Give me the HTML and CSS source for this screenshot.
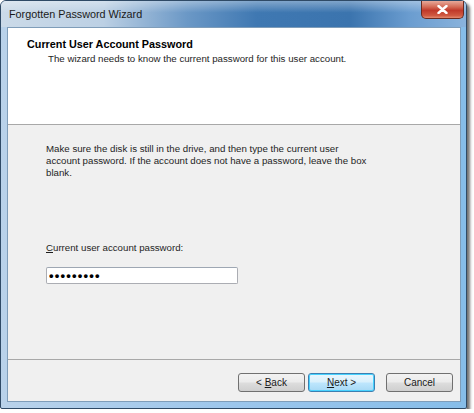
FILE: index.html
```html
<!DOCTYPE html>
<html lang="en">
<head>
  <meta charset="UTF-8" />
  <title>Forgotten Password Wizard</title>
  <link rel="stylesheet" href="styles.css">
</head>
<body>
  <div class="window">
    <div class="titlebar">
      <span class="title">Forgotten Password Wizard</span>
      <button class="close" aria-label="Close">
        <svg width="11" height="9" viewBox="0 0 11 9">
          <path d="M1.5 1 L9.5 8 M9.5 1 L1.5 8" stroke="#fff" stroke-width="2.4" stroke-linecap="round" />
        </svg>
      </button>
    </div>

    <div class="client">
      <div class="header">
        <div class="heading">Current User Account Password</div>
        <div class="subheading">The wizard needs to know the current password for this user account.</div>
      </div>

      <div class="content">
        <p class="intro">Make sure the disk is still in the drive, and then type the current user<br>account password. If the account does not have a password, leave the box<br>blank.</p>
        <label for="password"><u>C</u>urrent user account password:</label>
        <input id="password" type="password" value="123456789">
      </div>

      <div class="footer">
        <button class="btn">&lt; <u>B</u>ack</button>
        <button class="btn default"><u>N</u>ext &gt;</button>
        <button class="btn cancel">Cancel</button>
      </div>
    </div>
  </div>
</body>
</html>
```

FILE: styles.css
```css
body {
  margin: 0;
  background-color: #ffffff;
  font-family: "Liberation Sans", Arial, sans-serif;
  color: #1e1e1e;
}
.window {
  width: 467px;
  height: 409px;
  box-sizing: border-box;
  border: 1px solid #2f4a66;
  border-radius: 6px 6px 2px 2px;
  background: linear-gradient(to right, #b9d2ea 0%, #9cc6ec 50%, #86bde9 100%);
  box-shadow: 3px 3px 3px rgba(0, 0, 0, 0.55);
  display: flex;
  flex-direction: column;
  padding: 0 5px 6px 6px;
}
.titlebar {
  height: 26px;
  margin: 0 -5px 0 -6px;
  padding: 0 2px 0 8px;
  display: flex;
  align-items: flex-start;
  justify-content: space-between;
  border-radius: 5px 5px 0 0;
  background:
    linear-gradient(to bottom, rgba(255, 255, 255, 0.35) 0%, rgba(255, 255, 255, 0) 45%),
    linear-gradient(to right, #cbdae8 0%, #bcd0e4 22%, #6b98c6 40%, #3f78b2 55%, #3b74ae 75%, #6b9dd0 88%, #8ab3dc 100%);
}
.title {
  font-size: 10.8px;
  line-height: 26px;
  color: #1a1a1a;
}
.close {
  width: 43px;
  height: 18px;
  padding: 0;
  border: 1px solid #6b2a1f;
  border-top: none;
  border-radius: 0 0 5px 5px;
  background: linear-gradient(to bottom, #e7a99a 0%, #d36a55 35%, #c0392a 55%, #cf5840 85%, #e48a70 100%);
  display: flex;
  align-items: center;
  justify-content: center;
}
.client {
  flex: 1;
  display: flex;
  flex-direction: column;
  border: 1px solid #7f9db9;
  background-color: #f0f0f0;
}
.header {
  height: 97px;
  background-color: #ffffff;
  border-bottom: 1px solid #a8a8a8;
  padding: 9px 0 0 19px;
  box-sizing: border-box;
}
.heading {
  font-size: 10.8px;
  font-weight: bold;
  line-height: 15px;
  color: #000000;
}
.subheading {
  font-size: 9.7px;
  line-height: 14px;
  padding-left: 21px;
}
.content {
  flex: 1;
  padding: 18px 0 0 38px;
  display: flex;
  flex-direction: column;
  align-items: flex-start;
  border-bottom: 1px solid #a8a8a8;
}
.intro {
  margin: 0;
  font-size: 9.7px;
  line-height: 12px;
}
label {
  margin-top: 62px;
  font-size: 9.7px;
  line-height: 14px;
}
label u, .btn u {
  text-decoration-thickness: 1px;
}
input {
  margin-top: 12px;
  width: 192px;
  height: 17px;
  box-sizing: border-box;
  border: 1px solid #abadb3;
  border-top-color: #9ea7b3;
  border-radius: 2px;
  background-color: #ffffff;
  padding: 0 2px;
  font-size: 13px;
  font-weight: bold;
  letter-spacing: 1.2px;
  color: #000000;
}
.footer {
  height: 41px;
  display: flex;
  justify-content: flex-end;
  align-items: flex-start;
  padding: 13px 7px 0 0;
  box-sizing: border-box;
  gap: 3px;
}
.btn {
  width: 67px;
  height: 19px;
  padding: 0;
  border: 1px solid #707070;
  border-radius: 3px;
  background: linear-gradient(to bottom, #f2f2f2 0%, #ebebeb 48%, #dddddd 52%, #cfcfcf 100%);
  font-family: "Liberation Sans", Arial, sans-serif;
  font-size: 10px;
  color: #1a1a1a;
}
.btn.default {
  border-color: #3c7fb1;
  background: linear-gradient(to bottom, #eaf6fd 0%, #d9f0fc 48%, #bee6fd 52%, #a7d9f5 100%);
  box-shadow: inset 0 0 0 1px #48d2fe;
}
.btn.cancel {
  margin-left: 8px;
}
```
